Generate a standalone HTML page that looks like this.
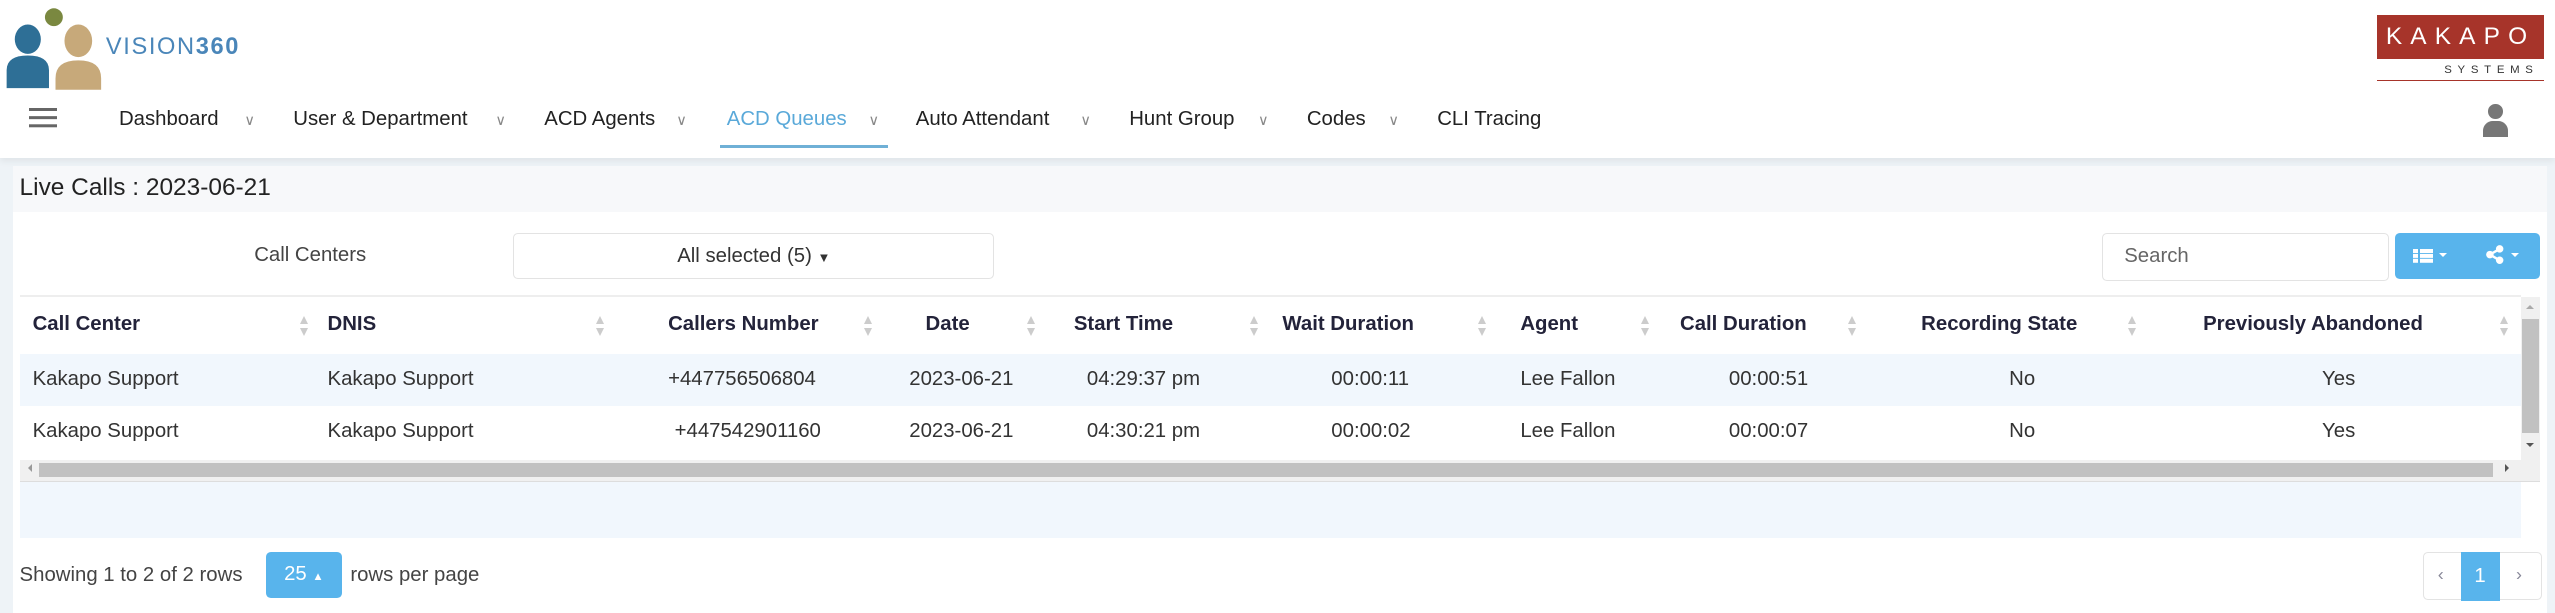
<!DOCTYPE html>
<html><head><meta charset="utf-8"><style>
html,body{margin:0;padding:0}
body{width:1568px;height:375.6px;overflow:hidden;zoom:1.6295;background:#eef3f7;font-family:"Liberation Sans",sans-serif;color:#333;position:relative}
.a{position:absolute;white-space:nowrap}
.hdr{position:absolute;left:0;top:0;width:1568px;height:97px;background:#fff;box-shadow:0 2px 4px rgba(0,0,0,.06)}
.nav{font-size:12.5px;color:#222;top:66px}
.chev{font-size:9px;color:#888;top:69px}
.card{position:absolute;left:8px;top:102px;width:1555px;height:274px;background:#fff}
.th{font-size:12.5px;font-weight:bold;color:#23233a;top:192px}
.td{font-size:12.5px;color:#333}
.sort{width:6px;height:12px;top:194px}
.sort:before{content:"";position:absolute;left:0;top:0;border:3px solid transparent;border-bottom:5px solid #ccc;border-top:0}
.sort:after{content:"";position:absolute;left:0;top:7px;border:3px solid transparent;border-top:5px solid #ccc;border-bottom:0}
</style></head><body>
<div class="hdr"></div>
<!-- logo -->
<svg class="a" style="left:3px;top:3px" width="62" height="52" viewBox="0 0 62 52">
<circle cx="30" cy="7.5" r="5.5" fill="#7a8840"/>
<ellipse cx="14" cy="21" rx="8" ry="9" fill="#2e6f96"/>
<path d="M1 51 V40 Q1 31 14 31 Q27 31 27 40 V51Z" fill="#2e6f96"/>
<ellipse cx="45" cy="22" rx="8.5" ry="10" fill="#c7a97a"/>
<path d="M31 52 V45 Q31 34 45 34 Q59 34 59 45 V52Z" fill="#c7a97a"/>
</svg>
<div class="a" style="left:65px;top:21px;font-size:14.5px;letter-spacing:1px;color:#4a86b9">VISION<b>360</b></div>
<div class="a" style="left:1459px;top:9px;width:102px;height:27px;background:#a7342a;color:#fff;font-size:15px;letter-spacing:5px;text-align:center;line-height:27px">KAKAPO</div>
<div class="a" style="left:1500px;top:39px;font-size:7px;letter-spacing:3.5px;color:#333">SYSTEMS</div>
<div class="a" style="left:1459px;top:49px;width:102px;height:1px;background:#a7342a"></div>
<!-- hamburger -->
<div class="a" style="left:18px;top:66px;width:17px;height:2px;background:#666;box-shadow:0 5px 0 #666,0 10px 0 #666"></div>
<div class="a nav" style="left:73px">Dashboard</div><div class="a chev" style="left:150px">∨</div>
<div class="a nav" style="left:180px">User &amp; Department</div><div class="a chev" style="left:304px">∨</div>
<div class="a nav" style="left:334px">ACD Agents</div><div class="a chev" style="left:415px">∨</div>
<div class="a nav" style="left:446px;color:#5aa9d9">ACD Queues</div><div class="a chev" style="left:533px">∨</div>
<div class="a" style="left:442px;top:89px;width:103px;height:2px;background:#6fb0d6"></div>
<div class="a nav" style="left:562px">Auto Attendant</div><div class="a chev" style="left:663px">∨</div>
<div class="a nav" style="left:693px">Hunt Group</div><div class="a chev" style="left:772px">∨</div>
<div class="a nav" style="left:802px">Codes</div><div class="a chev" style="left:852px">∨</div>
<div class="a nav" style="left:882px">CLI Tracing</div>
<!-- user icon -->
<div class="a" style="left:1527px;top:64px;width:9px;height:9px;border-radius:50%;background:#777"></div>
<div class="a" style="left:1524px;top:74px;width:15px;height:10px;border-radius:6px 6px 0 0;background:#777"></div>
<!-- card -->
<div class="card"></div>
<div class="a" style="left:8px;top:102px;width:1555px;height:28px;background:#f7f8fa"></div>
<div class="a" style="left:12px;top:107px;font-size:15px;color:#222">Live Calls : 2023-06-21</div>
<div class="a" style="left:156px;top:150px;font-size:12.5px;color:#444">Call Centers</div>
<div class="a" style="left:315px;top:143px;width:294px;height:27px;border:1px solid #e3e3e3;border-radius:3px;background:#fff;font-size:12.5px;line-height:27px;text-align:center;color:#333">All selected (5) <span style="font-size:8px">▼</span></div>
<div class="a" style="left:1290px;top:143px;width:175px;height:28px;border:1px solid #e3e3e3;border-radius:3px;background:#fff;font-size:12.5px;line-height:28px;color:#666;text-indent:13px">Search</div>
<div class="a" style="left:1470px;top:143px;width:89px;height:28px;border-radius:3px;background:#58b4ec"></div>
<div class="a" style="left:1481px;top:153px;width:3px;height:2px;background:#fff;box-shadow:0 3px 0 #fff,0 6px 0 #fff"></div>
<div class="a" style="left:1485px;top:153px;width:8px;height:2px;background:#fff;box-shadow:0 3px 0 #fff,0 6px 0 #fff"></div>
<div class="a" style="left:1497px;top:155px;border:3px solid transparent;border-top:3px solid #fff"></div>
<svg class="a" style="left:1525px;top:150px" width="12" height="13" viewBox="0 0 12 13"><circle cx="9" cy="3" r="2.3" fill="#fff"/><circle cx="3" cy="6.5" r="2.3" fill="#fff"/><circle cx="9" cy="10" r="2.3" fill="#fff"/><path d="M9 3L3 6.5L9 10" stroke="#fff" stroke-width="1.5" fill="none"/></svg>
<div class="a" style="left:1541px;top:155px;border:3px solid transparent;border-top:3px solid #fff"></div>
<!-- table -->
<div class="a" style="left:12px;top:181px;width:1535px;height:1px;background:#eee"></div>
<div class="a" style="left:12px;top:217px;width:1535px;height:32px;background:#f1f7fd"></div>
<div class="a" style="left:12px;top:296px;width:1535px;height:34px;background:#f1f7fd"></div>
<div class="a th" style="left:20px">Call Center</div><div class="a sort" style="left:184px"></div>
<div class="a th" style="left:201px">DNIS</div><div class="a sort" style="left:366px"></div>
<div class="a th" style="left:410px">Callers Number</div><div class="a sort" style="left:530px"></div>
<div class="a th" style="left:568px">Date</div><div class="a sort" style="left:630px"></div>
<div class="a th" style="left:659px">Start Time</div><div class="a sort" style="left:767px"></div>
<div class="a th" style="left:787px">Wait Duration</div><div class="a sort" style="left:907px"></div>
<div class="a th" style="left:933px">Agent</div><div class="a sort" style="left:1007px"></div>
<div class="a th" style="left:1031px">Call Duration</div><div class="a sort" style="left:1134px"></div>
<div class="a th" style="left:1179px">Recording State</div><div class="a sort" style="left:1306px"></div>
<div class="a th" style="left:1352px">Previously Abandoned</div><div class="a sort" style="left:1534px"></div>

<div class="a td" style="left:20px;top:226px">Kakapo Support</div>
<div class="a td" style="left:201px;top:226px">Kakapo Support</div>
<div class="a td" style="left:410px;top:226px">+447756506804</div>
<div class="a td" style="left:558px;top:226px">2023-06-21</div>
<div class="a td" style="left:667px;top:226px">04:29:37 pm</div>
<div class="a td" style="left:817px;top:226px">00:00:11</div>
<div class="a td" style="left:933px;top:226px">Lee Fallon</div>
<div class="a td" style="left:1061px;top:226px">00:00:51</div>
<div class="a td" style="left:1233px;top:226px">No</div>
<div class="a td" style="left:1425px;top:226px">Yes</div>

<div class="a td" style="left:20px;top:258px">Kakapo Support</div>
<div class="a td" style="left:201px;top:258px">Kakapo Support</div>
<div class="a td" style="left:414px;top:258px">+447542901160</div>
<div class="a td" style="left:558px;top:258px">2023-06-21</div>
<div class="a td" style="left:667px;top:258px">04:30:21 pm</div>
<div class="a td" style="left:817px;top:258px">00:00:02</div>
<div class="a td" style="left:933px;top:258px">Lee Fallon</div>
<div class="a td" style="left:1061px;top:258px">00:00:07</div>
<div class="a td" style="left:1233px;top:258px">No</div>
<div class="a td" style="left:1425px;top:258px">Yes</div>
<!-- scrollbars -->
<div class="a" style="left:12px;top:282px;width:1547px;height:13px;background:#f0f0f0;border-bottom:1px solid #ddd"></div>
<div class="a" style="left:24px;top:284px;width:1506px;height:9px;background:#c1c1c1"></div>
<div class="a" style="left:17px;top:285px;border:3px solid transparent;border-right:3px solid #999;border-left:0"></div>
<div class="a" style="left:1537px;top:285px;border:3px solid transparent;border-left:3px solid #555;border-right:0"></div>
<div class="a" style="left:1547px;top:182px;width:12px;height:100px;background:#f0f0f0"></div>
<div class="a" style="left:1548px;top:196px;width:10px;height:70px;background:#c1c1c1"></div>
<div class="a" style="left:1550px;top:187px;border:3px solid transparent;border-bottom:3px solid #aaa;border-top:0"></div>
<div class="a" style="left:1550px;top:272px;border:3px solid transparent;border-top:3px solid #555;border-bottom:0"></div>
<!-- footer -->
<div class="a" style="left:12px;top:346px;font-size:12.5px;color:#444">Showing 1 to 2 of 2 rows</div>
<div class="a" style="left:163px;top:339px;width:47px;height:28px;border-radius:3px;background:#58b4ec;color:#fff;font-size:12.5px;line-height:28px;text-align:center">25 <span style="font-size:7px">▲</span></div>
<div class="a" style="left:215px;top:346px;font-size:12.5px;color:#444">rows per page</div>
<div class="a" style="left:1487px;top:339px;width:72px;height:28px;border:1px solid #e3e3e3;border-radius:3px;background:#fff"></div>
<div class="a" style="left:1510px;top:339px;width:24px;height:30px;background:#58b4ec;color:#fff;font-size:12.5px;line-height:30px;text-align:center">1</div>
<div class="a" style="left:1496px;top:346px;font-size:11px;color:#889">‹</div>
<div class="a" style="left:1544px;top:346px;font-size:11px;color:#889">›</div>
</body></html>
